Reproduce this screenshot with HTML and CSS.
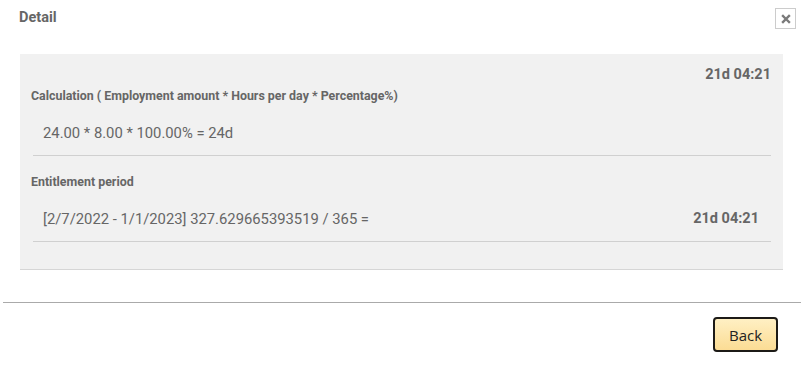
FILE: index.html
```html
<!DOCTYPE html>
<html>
<head>
<meta charset="utf-8">
<link rel="stylesheet" href="styles.css">
</head>
<body>
<div class="dialog">
  <div class="header">
    <div class="title">Detail</div>
    <button class="close" aria-label="Close">
      <svg width="10" height="10" viewBox="0 0 10 10"><path d="M2 2 L8 8 M8 2 L2 8" stroke="#7a7a7a" stroke-width="2.4" stroke-linecap="square"/></svg>
    </button>
  </div>
  <div class="panel">
    <div class="total">21d 04:21</div>
    <div class="label">Calculation ( Employment amount * Hours per day * Percentage%)</div>
    <div class="row"><span>24.00 * 8.00 * 100.00% = 24d</span></div>
    <div class="label label-second">Entitlement period</div>
    <div class="row"><span>[2/7/2022 - 1/1/2023] 327.629665393519 / 365 =</span><span class="amount">21d 04:21</span></div>
  </div>
  <hr class="divider">
  <div class="footer">
    <button class="back">Back</button>
  </div>
</div>
</body>
</html>
```
FILE: styles.css
```css
html, body {
  margin: 0;
  padding: 0;
  background: #fff;
}
body {
  font-family: "Roboto", "Liberation Sans", sans-serif;
  color: #666;
}
.dialog {
  width: 804px;
}
.header {
  display: flex;
  justify-content: space-between;
  align-items: flex-start;
  padding: 8px 8px 0 19px;
  height: 54px;
  box-sizing: border-box;
}
.title {
  font-weight: bold;
  font-size: 14.5px;
  line-height: 20px;
  color: #666;
}
.close {
  width: 21px;
  height: 21px;
  border: 1px solid #ccc;
  background: #fff;
  padding: 0;
  display: flex;
  align-items: center;
  justify-content: center;
}
.panel {
  margin: 0 21px 0 20px;
  background: #f1f1f1;
  border-bottom: 1px solid #d6d6d6;
  padding: 13px 12px 27px 11px;
}
.total {
  text-align: right;
  font-weight: bold;
  font-size: 14.5px;
  line-height: 16px;
}
.label {
  font-weight: bold;
  font-size: 12.4px;
  line-height: 16px;
  margin-top: 5px;
}
.label-second {
  margin-top: 18px;
}
.row {
  margin: 8px 0 0 2px;
  display: flex;
  justify-content: space-between;
  padding: 12px 12px 13px 10px;
  border-bottom: 1px solid #d0d0d0;
  font-size: 14.8px;
  line-height: 18px;
}
.amount {
  font-weight: bold;
  font-size: 14.5px;
}
.divider {
  margin: 32px 3px 0 3px;
  border: 0;
  border-top: 1px solid #aaa;
  height: 0;
}
.footer {
  display: flex;
  justify-content: flex-end;
  padding: 14px 26px 0 0;
}
.back {
  width: 65px;
  height: 35px;
  border: 2px solid #1c1a17;
  border-radius: 4px;
  background: linear-gradient(#fff0c4, #fbdc94);
  font-family: "Open Sans", "DejaVu Sans", sans-serif;
  font-size: 15px;
  color: #222;
  padding: 0;
}
```
